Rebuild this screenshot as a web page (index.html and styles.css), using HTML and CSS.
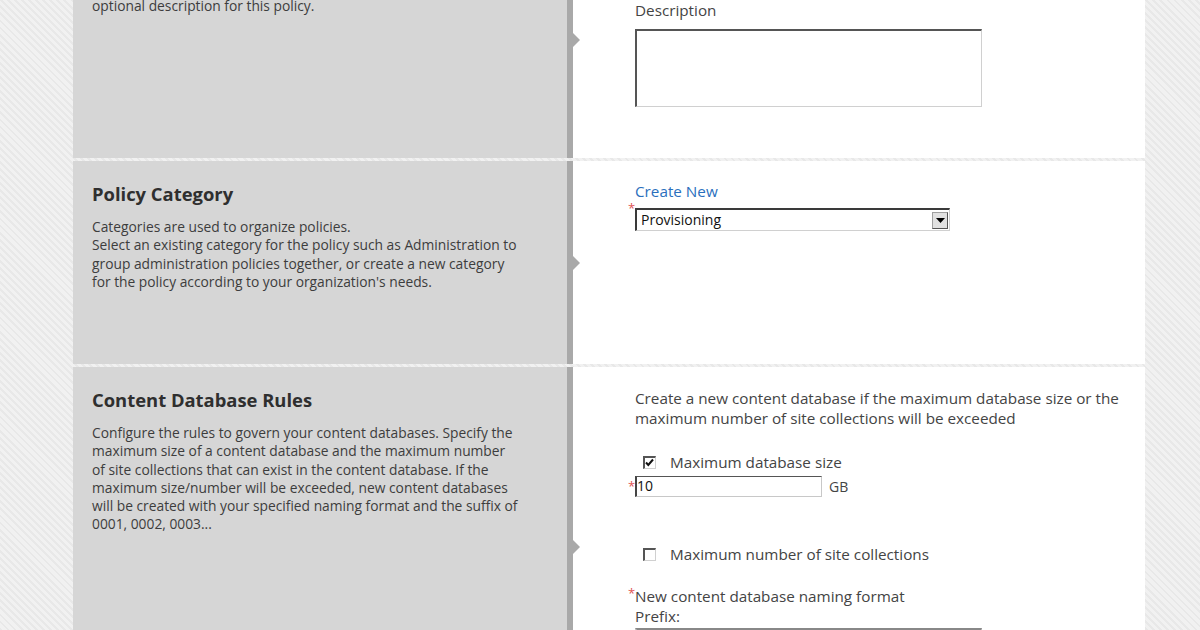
FILE: index.html
```html
<!DOCTYPE html>
<html>
<head>
<meta charset="utf-8">
<link rel="stylesheet" href="styles.css">
</head>
<body>
<div class="page">
  <section class="sec s1">
    <div class="left">
      <h3 class="title">Name and Description</h3>
      <p class="desc">Type a name for this policy and an<br>optional description for this policy.</p>
    </div>
    <div class="bar"><span class="arrow"></span></div>
    <div class="right">
      <div class="label req">Name</div>
      <div class="field-wrap"><div class="textbox wide"></div></div>
      <div class="label desc-label">Description</div>
      <div class="textarea"></div>
    </div>
  </section>

  <section class="sec s2">
    <div class="left">
      <h3 class="title">Policy Category</h3>
      <p class="desc">Categories are used to organize policies.<br>Select an existing category for the policy such as Administration to<br>group administration policies together, or create a new category<br>for the policy according to your organization's needs.</p>
    </div>
    <div class="bar"><span class="arrow"></span></div>
    <div class="right">
      <a class="link label" href="#">Create New</a>
      <div class="field-wrap select-wrap">
        <span class="star">*</span>
        <div class="select">
          <span class="select-text">Provisioning</span>
          <span class="select-btn"><svg width="9" height="5" viewBox="0 0 9 5"><path d="M0 0H9L4.5 5Z" fill="#000"/></svg></span>
        </div>
      </div>
    </div>
  </section>

  <section class="sec s3">
    <div class="left">
      <h3 class="title">Content Database Rules</h3>
      <p class="desc">Configure the rules to govern your content databases. Specify the<br>maximum size of a content database and the maximum number<br>of site collections that can exist in the content database. If the<br>maximum size/number will be exceeded, new content databases<br>will be created with your specified naming format and the suffix of<br>0001, 0002, 0003...</p>
    </div>
    <div class="bar"><span class="arrow"></span></div>
    <div class="right">
      <p class="intro">Create a new content database if the maximum database size or the<br>maximum number of site collections will be exceeded</p>
      <div class="check-row first">
        <span class="checkbox checked"><svg width="11" height="11" viewBox="0 0 11 11"><path d="M2 5.5L4.3 8L9 2.5" fill="none" stroke="#111" stroke-width="2"/></svg></span>
        <span class="check-label">Maximum database size</span>
      </div>
      <div class="field-wrap size-row">
        <span class="star">*</span>
        <div class="textbox size">10</div>
        <span class="unit">GB</span>
      </div>
      <div class="check-row second">
        <span class="checkbox"></span>
        <span class="check-label">Maximum number of site collections</span>
      </div>
      <div class="field-wrap naming">
        <span class="star">*</span>
        <div class="label">New content database naming format</div>
      </div>
      <div class="label">Prefix:</div>
      <div class="textbox prefix"></div>
    </div>
  </section>
</div>
</body>
</html>
```
FILE: styles.css
```css
html, body {
  margin: 0;
  padding: 0;
}
body {
  width: 1200px;
  height: 630px;
  overflow: hidden;
  background-color: #ededed;
  background-image: repeating-linear-gradient(45deg, #e8e8e8 0px, #e8e8e8 2px, #f1f1f1 2px, #f1f1f1 5px);
  font-family: "Open Sans", "Noto Sans", sans-serif;
  color: #444;
}
.page {
  width: 1072px;
  margin-left: 73px;
  margin-top: -78px;
  display: flex;
  flex-direction: column;
  gap: 3px;
}
.sec {
  display: grid;
  grid-template-columns: 494px 6px 572px;
}
.s1 { height: 236px; }
.s2 { height: 203px; }
.s3 { height: 360px; }

.left {
  background: #d6d6d6;
  padding: 21px 20px 0 19px;
}
.title {
  margin: 0;
  font-size: 18.4px;
  line-height: 24px;
  font-weight: 700;
  color: #2f2f2f;
}
.desc {
  margin: 12px 0 0;
  font-size: 13.8px;
  line-height: 18.3px;
  color: #3d3d3d;
  white-space: nowrap;
}
.bar {
  background: #a9a9a9;
  position: relative;
}
.arrow {
  position: absolute;
  left: 6px;
  top: 50%;
  margin-top: -7px;
  width: 0;
  height: 0;
  border-left: 7px solid #a9a9a9;
  border-top: 7px solid transparent;
  border-bottom: 7px solid transparent;
}
.right {
  background: #fff;
  padding: 20px 0 0 62px;
  font-size: 15.25px;
}
.label {
  display: block;
  line-height: 20px;
  color: #444;
}
.link {
  color: #2a6fbd;
  text-decoration: none;
}
.field-wrap {
  position: relative;
  display: flex;
  align-items: center;
}
.star {
  position: absolute;
  left: -7px;
  top: -6px;
  color: #e05555;
  font-size: 13px;
  line-height: 12px;
}
.textbox {
  box-sizing: border-box;
  height: 23px;
  border: 1px solid #c8c8c8;
  border-top-color: #555;
  border-left: 2px solid #444;
  background: #fff;
}
.wide { width: 347px; margin-top: 7px; }
.desc-label { margin-top: 8px; }
.textarea {
  box-sizing: border-box;
  width: 347px;
  height: 78px;
  margin-top: 9px;
  border: 1px solid #d0d0d0;
  border-top: 2px solid #555;
  border-left: 2px solid #555;
}
.select-wrap { margin-top: 7px; }
.select-wrap .star { top: -6px; left: -7px; }
.select {
  box-sizing: border-box;
  width: 315px;
  height: 23px;
  display: flex;
  align-items: center;
  justify-content: space-between;
  border: 1px solid #d0d0d0;
  border-top: 2px solid #3a3a3a;
  border-left: 2px solid #3a3a3a;
  padding-left: 4px;
  color: #111;
}
.select-text { font-size: 14px; line-height: 18px; }
.select-btn {
  width: 16px;
  height: 17px;
  margin-right: 1px;
  background: #e1e1e1;
  border: 1px solid #a0a0a0;
  border-right-color: #555;
  border-bottom-color: #555;
  box-sizing: border-box;
  display: flex;
  align-items: center;
  justify-content: center;
}
.intro {
  margin: 1px 0 0;
  line-height: 20px;
  white-space: nowrap;
}
.check-row {
  display: flex;
  align-items: center;
  height: 20px;
  padding-left: 8px;
}
.check-row.first { margin-top: 24px; }
.check-row.second { margin-top: 47px; }
.checkbox {
  box-sizing: border-box;
  width: 13px;
  height: 13px;
  border: 1px solid #d0d0d0;
  border-top: 2px solid #555;
  border-left: 2px solid #555;
  background: #fff;
  display: flex;
  align-items: center;
  justify-content: center;
  margin-right: 14px;
}
.checkbox svg { margin-top: -1px; margin-left: -1px; }
.check-label { line-height: 20px; }
.size-row { margin-top: 4px; }
.size-row .star { top: 4px; left: -7px; }
.size {
  width: 187px;
  height: 21px;
  line-height: 18px;
  font-size: 14px;
  color: #111;
  padding-left: 0;
}
.unit { margin-left: 7px; color: #444; font-size: 14px; }
.naming { margin-top: 22px; }
.naming .star { top: 1px; }
.prefix {
  width: 347px;
  margin-top: 2px;
  border-left-color: #c8c8c8;
  border-top: 2px solid #888;
}
```
